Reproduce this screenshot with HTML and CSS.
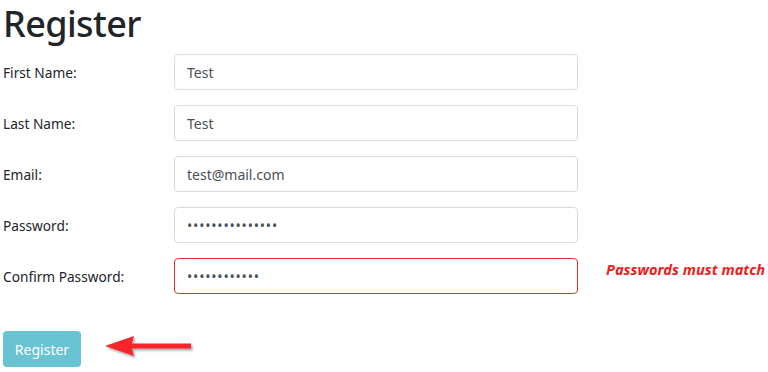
FILE: index.html
```html
<!DOCTYPE html>
<html>
<head>
<meta charset="utf-8">
<link rel="stylesheet" href="styles.css">
</head>
<body>
<div class="page">
  <h1 class="title">Register</h1>
  <form class="form">
    <div class="row">
      <label class="label">First Name:</label>
      <input class="input" type="text" value="Test">
    </div>
    <div class="row">
      <label class="label">Last Name:</label>
      <input class="input" type="text" value="Test">
    </div>
    <div class="row">
      <label class="label">Email:</label>
      <input class="input" type="text" value="test@mail.com">
    </div>
    <div class="row">
      <label class="label">Password:</label>
      <input class="input" type="password" value="123456789012345">
    </div>
    <div class="row">
      <label class="label">Confirm Password:</label>
      <input class="input invalid" type="password" value="123456789012">
      <span class="error">Passwords must match</span>
    </div>
    <div class="actions">
      <button class="btn" type="button" disabled>Register</button>
      <svg class="arrow" width="92" height="26" viewBox="0 0 92 26">
        <defs>
          <filter id="sh" x="-10%" y="-30%" width="130%" height="180%">
            <feDropShadow dx="1.5" dy="2" stdDeviation="1.2" flood-color="#000" flood-opacity="0.35"/>
          </filter>
        </defs>
        <path d="M2 12 L31 2 L29 9.5 L88 9.5 L88 14.5 L29 14.5 L31 22 Z" fill="#f5252a" filter="url(#sh)"/>
      </svg>
    </div>
  </form>
</div>
</body>
</html>
```
FILE: styles.css
```css
html, body {
  margin: 0;
  padding: 0;
  background: #fff;
}
.page {
  padding: 0 0 0 3px;
  font-family: "Noto Sans", "Open Sans", sans-serif;
  color: #212529;
}
.title {
  margin: 0;
  padding-top: 0;
  font-size: 36px;
  font-weight: 500;
  line-height: 47px;
  letter-spacing: -0.6px;
  color: #212529;
}
.form {
  margin-top: 7px;
  display: flex;
  flex-direction: column;
  gap: 15px;
}
.row {
  display: flex;
  align-items: center;
  height: 36px;
}
.label {
  width: 171px;
  font-size: 13.7px;
  color: #212529;
}
.input {
  box-sizing: border-box;
  width: 404px;
  height: 36px;
  margin: 0;
  padding: 0 12px;
  border: 1px solid #d7dbe0;
  border-radius: 4px;
  font-family: "Noto Sans", "Open Sans", sans-serif;
  font-size: 14px;
  color: #495057;
  background: #fff;
  outline: none;
}
.input[type="password"] {
  letter-spacing: 0.8px;
}
.input.invalid {
  border-color: #f52a2a;
}
.error {
  margin-left: 28px;
  margin-bottom: 14px;
  font-size: 14.6px;
  font-weight: 700;
  font-style: italic;
  color: #ee1c1c;
  white-space: nowrap;
}
.actions {
  margin-top: 22px;
  display: flex;
  align-items: center;
  gap: 22px;
}
.btn {
  box-sizing: border-box;
  width: 78px;
  height: 36px;
  border: none;
  border-radius: 4px;
  background: #68c4d2;
  color: #fff;
  font-family: "Noto Sans", "Open Sans", sans-serif;
  font-size: 14px;
  padding: 0;
}
.arrow {
  display: block;
  margin-top: -4px;
}
```
